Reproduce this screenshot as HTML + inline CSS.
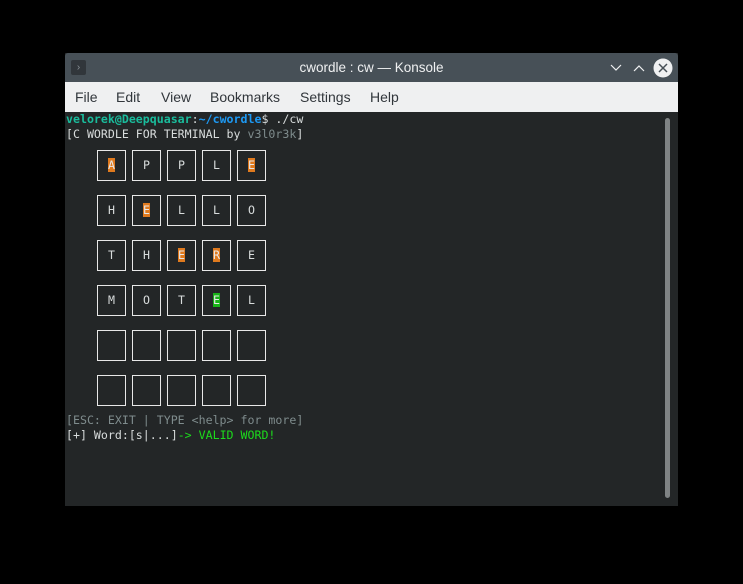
<!DOCTYPE html>
<html><head><style>
body{margin:0;width:743px;height:584px;background:#000;position:relative;overflow:hidden;font-family:"Liberation Sans",sans-serif}
.win{position:absolute;left:65px;top:53px;width:613px;height:453px;background:#232627}
.title{position:absolute;left:0;top:0;width:613px;height:29px;background:#475057;color:#eff0f1;font-size:13.5px;text-align:center;line-height:29px;border-radius:3px 3px 0 0}
.menu{position:absolute;left:0;top:29px;width:613px;height:30px;background:#eff0f1;color:#31363b;font-size:14px;line-height:30px}
.menu span{position:absolute}
.term{position:absolute;left:0;top:59px;width:613px;height:394px;background:#232627;font-family:"DejaVu Sans Mono","Liberation Mono",monospace;font-size:11.6px;color:#d8dcdc}
.ln{position:absolute;left:1px;white-space:pre;line-height:15px}
.box{position:absolute;width:27px;height:29px;border:1px solid #e8e8e8;text-align:center;line-height:29px}
.box b{font-weight:normal;display:inline-block;line-height:14px}
.o{background:#e07a1e;color:#e8e8e8}
.g{background:#18b218;color:#e8e8e8}
.sb{position:absolute;left:600px;top:6px;width:5px;height:380px;background:#7f8384;border-radius:3px}
</style></head><body>
<div class="win">
 <div class="title">cwordle : cw — Konsole
  <div style="position:absolute;left:6px;top:7px;width:15px;height:15px;background:#31363b;border-radius:2px;color:#8a9196;font-size:10px;line-height:15px">›</div>
  <svg style="position:absolute;left:544px;top:8px" width="14" height="14"><path d="M2 4l5 5 5-5" stroke="#eff0f1" fill="none" stroke-width="1.2"/></svg>
  <svg style="position:absolute;left:567px;top:8px" width="14" height="14"><path d="M2 10l5-5 5 5" stroke="#eff0f1" fill="none" stroke-width="1.2"/></svg>
  <svg style="position:absolute;left:588px;top:5px" width="20" height="20"><circle cx="10" cy="10" r="9.5" fill="#eff0f1"/><path d="M6 6l8 8M14 6l-8 8" stroke="#475057" stroke-width="1.5"/></svg>
 </div>
 <div class="menu"><span style="left:10px">File</span><span style="left:51px">Edit</span><span style="left:96px">View</span><span style="left:145px">Bookmarks</span><span style="left:235px">Settings</span><span style="left:305px">Help</span></div>
 <div class="term">
  <div class="ln" style="top:0"><span style="color:#1abc9c;font-weight:bold">velorek@Deepquasar</span>:<span style="color:#1d99f3;font-weight:bold">~/cwordle</span>$ ./cw</div>
  <div class="ln" style="top:15px">[C WORDLE FOR TERMINAL by <span style="color:#7f8c8d">v3l0r3k</span>]</div>
  <div class="ln" style="top:301px;color:#7f8c8d">[ESC: EXIT | TYPE &lt;help&gt; for more]</div>
  <div class="ln" style="top:316px">[+] Word:[s|...]<span style="color:#1cdc1c">-&gt; VALID WORD!</span></div>
  <div class="sb"></div>
 </div>
</div>
<div id="g"></div>
<script>
var rows=[["A","P","P","L","E"],["H","E","L","L","O"],["T","H","E","R","E"],["M","O","T","E","L"],["","","","",""],["","","","",""]];
var cls=[["o","","","","o"],["","o","","",""],["","","o","o",""],["","","","g",""],["","","","",""],["","","","",""]];
var h="";
for(var r=0;r<6;r++)for(var c=0;c<5;c++){
 var t=rows[r][c];
 h+='<div class="box" style="left:'+(97+c*35)+'px;top:'+(150+r*45)+'px;font-family:\'DejaVu Sans Mono\',monospace;font-size:11.6px;color:#d8dcdc">'+(t?'<b class="'+cls[r][c]+'">'+t+'</b>':'')+'</div>';
}
document.getElementById("g").innerHTML=h;
</script>
</body></html>
